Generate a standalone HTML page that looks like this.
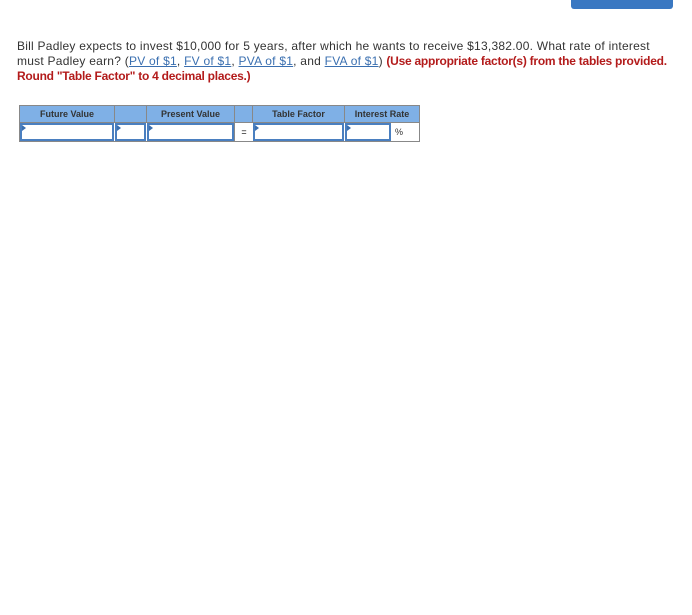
<!DOCTYPE html>
<html><head><style>
body{margin:0;width:692px;height:615px;background:#fff;font-family:"Liberation Sans",Arial,sans-serif;position:relative;overflow:hidden}
.btn{position:absolute;left:571px;top:-6px;width:102px;height:15px;background:#3a78c2;border-radius:3px}
.q{position:absolute;left:17px;top:39px;width:680px;font-size:12px;line-height:15px;color:#333;white-space:nowrap;letter-spacing:0.24px}
.q a{color:#3a6fb0;text-decoration:underline}
.r{color:#b31b1b;font-weight:bold;letter-spacing:-0.25px}
.c{position:absolute;box-sizing:border-box}
.h{background:#7fb0e6;border:1px solid #888;font-size:9px;font-weight:bold;color:#333;text-align:center;line-height:16px}
.i{border:2px solid #4a7fc0;background:#fff}
.i::before{content:"";position:absolute;left:0;top:0;border-left:4px solid #3a6fb0;border-top:3px solid transparent;border-bottom:3px solid transparent}
</style></head><body>
<div class="btn"></div>
<div class="q">Bill Padley expects to invest $10,000 for 5 years, after which he wants to receive $13,382.00. What rate of interest<br>must Padley earn? (<a>PV of $1</a>, <a>FV of $1</a>, <a>PVA of $1</a>, and <a>FVA of $1</a>) <span class="r">(Use appropriate factor(s) from the tables provided.<br>Round "Table Factor" to 4 decimal places.)</span></div>
<div class="c" style="left:19px;top:105px;width:401px;height:37px;border:1px solid #888;background:#fff"></div>
<div class="c h" style="left:19px;top:105px;width:96px;height:18px">Future Value</div>
<div class="c h" style="left:114px;top:105px;width:33px;height:18px"></div>
<div class="c h" style="left:146px;top:105px;width:89px;height:18px">Present Value</div>
<div class="c h" style="left:234px;top:105px;width:19px;height:18px"></div>
<div class="c h" style="left:252px;top:105px;width:93px;height:18px">Table Factor</div>
<div class="c h" style="left:344px;top:105px;width:76px;height:18px">Interest Rate</div>
<div class="c i" style="left:20px;top:123px;width:94px;height:18px"></div>
<div class="c i" style="left:115px;top:123px;width:31px;height:18px"></div>
<div class="c i" style="left:147px;top:123px;width:87px;height:18px"></div>
<div class="c" style="left:234px;top:123px;width:19px;height:18px;border-left:1px solid #888;font-size:9px;text-align:center;line-height:18px">=</div>
<div class="c i" style="left:253px;top:123px;width:91px;height:18px"></div>
<div class="c i" style="left:345px;top:123px;width:46px;height:18px"></div>
<div class="c" style="left:392px;top:123px;width:27px;height:18px;font-size:9px;line-height:18px;padding-left:3px;color:#333">%</div>
</body></html>
